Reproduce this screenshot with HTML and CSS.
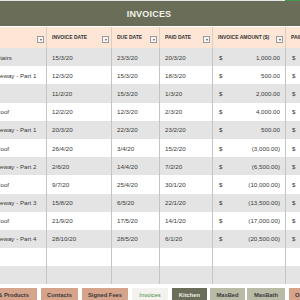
FILE: index.html
```html
<!DOCTYPE html>
<html lang="en">
<head>
    <meta charset="UTF-8">
    <meta name="viewport" content="width=device-width, initial-scale=1.0">
    <title>Invoices</title>
    <link rel="stylesheet" href="styles.css">
</head>
<body>
    <div class="topline"><span class="sel"></span></div>
    <h1 class="title">INVOICES</h1>

    <div class="sheet">
        <div class="row head">
            <div class="cell"><span></span><i class="drop"></i></div>
            <div class="cell"><span>INVOICE DATE</span><i class="drop"></i></div>
            <div class="cell"><span>DUE DATE</span><i class="drop"></i></div>
            <div class="cell"><span>PAID DATE</span><i class="drop"></i></div>
            <div class="cell"><span>INVOICE AMOUNT ($)</span><i class="drop"></i></div>
            <div class="cell"><span>PAID</span></div>
        </div>

        <div class="row alt">
            <div class="cell name"><span class="cut-1">Stairs</span></div>
            <div class="cell">15/3/20</div><div class="cell">23/3/20</div><div class="cell">20/3/20</div>
            <div class="cell money"><span>$</span><span>1,000.00</span></div><div class="cell last">$</div>
        </div>
        <div class="row">
            <div class="cell name"><span class="cut-4">Driveway - Part 1</span></div>
            <div class="cell">12/3/20</div><div class="cell">15/3/20</div><div class="cell">18/3/20</div>
            <div class="cell money"><span>$</span><span>500.00</span></div><div class="cell last">$</div>
        </div>
        <div class="row alt">
            <div class="cell name"></div>
            <div class="cell">11/2/20</div><div class="cell">15/3/20</div><div class="cell">1/3/20</div>
            <div class="cell money"><span>$</span><span>2,000.00</span></div><div class="cell last">$</div>
        </div>
        <div class="row">
            <div class="cell name"><span class="cut-1">Roof</span></div>
            <div class="cell">12/2/20</div><div class="cell">12/3/20</div><div class="cell">2/3/20</div>
            <div class="cell money"><span>$</span><span>4,000.00</span></div><div class="cell last">$</div>
        </div>
        <div class="row alt">
            <div class="cell name"><span class="cut-4">Driveway - Part 1</span></div>
            <div class="cell">20/3/20</div><div class="cell">22/3/20</div><div class="cell">23/2/20</div>
            <div class="cell money"><span>$</span><span>500.00</span></div><div class="cell last">$</div>
        </div>
        <div class="row">
            <div class="cell name"><span class="cut-1">Roof</span></div>
            <div class="cell">26/4/20</div><div class="cell">3/4/20</div><div class="cell">15/2/20</div>
            <div class="cell money"><span>$</span><span>(3,000.00)</span></div><div class="cell last">$</div>
        </div>
        <div class="row alt">
            <div class="cell name"><span class="cut-4">Driveway - Part 2</span></div>
            <div class="cell">2/6/20</div><div class="cell">14/4/20</div><div class="cell">7/2/20</div>
            <div class="cell money"><span>$</span><span>(6,500.00)</span></div><div class="cell last">$</div>
        </div>
        <div class="row">
            <div class="cell name"><span class="cut-1">Roof</span></div>
            <div class="cell">9/7/20</div><div class="cell">25/4/20</div><div class="cell">30/1/20</div>
            <div class="cell money"><span>$</span><span>(10,000.00)</span></div><div class="cell last">$</div>
        </div>
        <div class="row alt">
            <div class="cell name"><span class="cut-4">Driveway - Part 3</span></div>
            <div class="cell">15/8/20</div><div class="cell">6/5/20</div><div class="cell">22/1/20</div>
            <div class="cell money"><span>$</span><span>(13,500.00)</span></div><div class="cell last">$</div>
        </div>
        <div class="row">
            <div class="cell name"><span class="cut-1">Roof</span></div>
            <div class="cell">21/9/20</div><div class="cell">17/5/20</div><div class="cell">14/1/20</div>
            <div class="cell money"><span>$</span><span>(17,000.00)</span></div><div class="cell last">$</div>
        </div>
        <div class="row alt">
            <div class="cell name"><span class="cut-4">Driveway - Part 4</span></div>
            <div class="cell">28/10/20</div><div class="cell">28/5/20</div><div class="cell">6/1/20</div>
            <div class="cell money"><span>$</span><span>(20,500.00)</span></div><div class="cell last">$</div>
        </div>
        <div class="row">
            <div class="cell name"></div><div class="cell"></div><div class="cell"></div>
            <div class="cell"></div><div class="cell"></div><div class="cell"></div>
        </div>
        <div class="row alt">
            <div class="cell name"></div><div class="cell"></div><div class="cell"></div>
            <div class="cell"></div><div class="cell"></div><div class="cell"></div>
        </div>
    </div>

    <div class="tabs">
        <div class="tab salmon first">&amp; Products</div>
        <div class="tab salmon w37">Contacts</div>
        <div class="tab salmon w46">Signed Fees</div>
        <div class="tab active w36">Invoices</div>
        <div class="tab olive w35">Kitchen</div>
        <div class="tab sage w35 tight">MasBed</div>
        <div class="tab sage w38">MasBath</div>
        <div class="tab salmon">Other</div>
    </div>
</body>
</html>
```

FILE: styles.css
```css
body {
    margin: 0;
    width: 300px;
    height: 300px;
    overflow: hidden;
    background-color: #fff;
    font-family: "Liberation Sans", Arial, sans-serif;
    color: #3a3a3a;
}

.topline {
    height: 1px;
    background-color: #e4e4e4;
    display: flex;
    justify-content: flex-end;
}

.sel {
    width: 15px;
    background-color: #3f9a52;
}

.title {
    margin: 0;
    height: 25px;
    line-height: 26px;
    background-color: #6a6d58;
    color: #f2f2ea;
    font-size: 9px;
    font-weight: bold;
    text-align: center;
    letter-spacing: 0.2px;
    padding-right: 2px;
}

.sheet {
    margin-top: 1px;
}

.row {
    display: grid;
    grid-template-columns: 47px 65px 48px 53px 73px 1fr;
    height: 18.2px;
    font-size: 6.2px;
}

.alt {
    background-color: #e4e4e4;
}

.cell {
    border-right: 1px solid #c4c4c4;
    display: flex;
    align-items: center;
    padding-left: 5px;
    white-space: nowrap;
    overflow: hidden;
}

.cell:last-child {
    border-right: none;
}

.head {
    height: 21px;
    background-color: #fde6d6;
    font-size: 5px;
    font-weight: bold;
    color: #333;
}

.head .cell {
    justify-content: space-between;
    padding-right: 2px;
    border-right-color: #d8cfc6;
}

.head .cell span {
    margin-bottom: 2px;
}

.drop {
    width: 5px;
    height: 5px;
    margin-top: 4px;
    border: 1px solid #9a9a9a;
    background-color: #f6f6f6;
    display: flex;
    align-items: center;
    justify-content: center;
}

.drop::after {
    content: "";
    border-left: 1.5px solid transparent;
    border-right: 1.5px solid transparent;
    border-top: 2px solid #555;
}

.name {
    padding-left: 0;
}

.cut-1 {
    margin-left: -4px;
}

.cut-4 {
    margin-left: -11px;
}

.money {
    justify-content: space-between;
    padding-left: 6px;
    padding-right: 5px;
}

.last {
    padding-left: 6px;
}

.tabs {
    display: flex;
    gap: 4px;
    margin-top: 4px;
    height: 14px;
    overflow: hidden;
    font-size: 5.8px;
    font-weight: bold;
}

.tab {
    flex: none;
    display: flex;
    align-items: center;
    justify-content: center;
    padding: 0 6px;
    white-space: nowrap;
    color: #3a3a3a;
    box-sizing: border-box;
}

.first {
    width: 37px;
    padding: 0 8px 0 0;
    justify-content: flex-end;
}

.w35 { width: 35px; }
.w36 { width: 36px; }
.w37 { width: 37px; }
.w38 { width: 38px; }
.w46 { width: 46px; }

.tight {
    margin-left: -1px;
    margin-right: -2px;
}

.salmon {
    background-color: #d6a38b;
}

.active {
    background-color: #f4f2ee;
    color: #3f8a3c;
    font-weight: normal;
}

.olive {
    background-color: #6a6d58;
    color: #eeeee6;
}

.sage {
    background-color: #b9bba6;
}
```
